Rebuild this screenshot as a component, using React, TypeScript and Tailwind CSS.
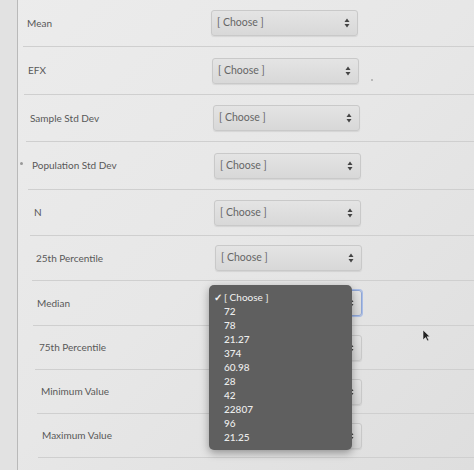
import React from 'react'

const rows = [
  { label: 'Mean', row: 'h-[47px] ml-[5px]', lab: 'w-[188px]' },
  { label: 'EFX', row: 'h-[48px] ml-[6px]', lab: 'w-[188px]' },
  { label: 'Sample Std Dev', row: 'h-[47px] ml-[8px]', lab: 'w-[187px]' },
  { label: 'Population Std Dev', row: 'h-[48px] ml-[10px]', lab: 'w-[186px]' },
  { label: 'N', row: 'h-[46px] ml-[12px]', lab: 'w-[184px]' },
  { label: '25th Percentile', row: 'h-[45px] ml-[14px]', lab: 'w-[183px]' },
  { label: 'Median', row: 'h-[45px] ml-[15px]', lab: 'w-[182px]', focused: true },
  { label: '75th Percentile', row: 'h-[44px] ml-[17px]', lab: 'w-[180px]' },
  { label: 'Minimum Value', row: 'h-[44px] ml-[19px]', lab: 'w-[178px]' },
  { label: 'Maximum Value', row: 'h-[44px] ml-[20px]', lab: 'w-[177px]' },
]

const options = ['72', '78', '21.27', '374', '60.98', '28', '42', '22807', '96', '21.25']

const Arrows = () => (
  <svg width="6" height="10" viewBox="0 0 6 10" className="text-[#444]">
    <path d="M3 0.5 L5.5 4 H0.5 Z" fill="currentColor" />
    <path d="M3 9.5 L5.5 6 H0.5 Z" fill="currentColor" />
  </svg>
)

const Select = ({ focused }: { focused?: boolean }) => (
  <div
    className={
      'flex h-[26px] w-[147px] items-center justify-between rounded-[3px] border bg-gradient-to-b from-[#e4e4e4] to-[#d8d8d8] pl-[5px] pr-[7px] shadow-[0_1px_1px_rgba(0,0,0,0.08)] ' +
      (focused ? 'border-[#8fa6d6] ring-1 ring-[#a9bde6]' : 'border-[#c9c9c9]')
    }
  >
    <span className="text-[10.5px] text-[#666]">[ Choose ]</span>
    <Arrows />
  </div>
)

export default function App() {
  return (
    <div
      className="relative flex h-[470px] w-[474px] overflow-hidden bg-gradient-to-br from-[#ececec] via-[#e7e7e7] to-[#dedede] text-[#585858]"
      style={{ fontFamily: 'Lato, "Open Sans", sans-serif' }}
    >
      {/* left rail */}
      <div className="w-[18px] shrink-0 border-r border-[#b9b9b9] bg-[#e2e2e2]" />

      <div className="flex-1">
        {rows.map((r) => (
          <div key={r.label} className={'flex items-center border-b border-[#cfcfcf] ' + r.row}>
            <div className={'pl-[4px] text-[10px] ' + r.lab}>{r.label}</div>
            <Select focused={r.focused} />
          </div>
        ))}
      </div>

      {/* stray dots */}
      <div className="absolute left-[20px] top-[162px] h-[3px] w-[3px] rounded-full bg-[#999]" />
      <div className="absolute left-[371px] top-[79px] h-[2px] w-[2px] rounded-full bg-[#aaa]" />

      {/* open dropdown */}
      <div className="absolute left-[209px] top-[285px] w-[143px] rounded-[5px] bg-[#5f5f5f] pb-[6px] pt-[5px] shadow-[0_3px_8px_rgba(0,0,0,0.35)]">
        <div className="flex h-[14px] items-center pl-[5px] text-[10px] text-[#f2f2f2]">
          <span className="w-[10px] text-[10px] font-bold">✓</span>
          <span>[ Choose ]</span>
        </div>
        {options.map((o) => (
          <div key={o} className="flex h-[14px] items-center pl-[15px] text-[10px] font-medium text-[#ececec]">
            {o}
          </div>
        ))}
      </div>

      {/* mouse cursor */}
      <svg className="absolute left-[422px] top-[329px]" width="9" height="13" viewBox="0 0 9 13">
        <path d="M1 1 L1 11 L3.5 8.5 L5.5 12 L7 11.3 L5 7.8 L8 7.8 Z" fill="#222" stroke="#eee" strokeWidth="0.6" />
      </svg>
    </div>
  )
}
